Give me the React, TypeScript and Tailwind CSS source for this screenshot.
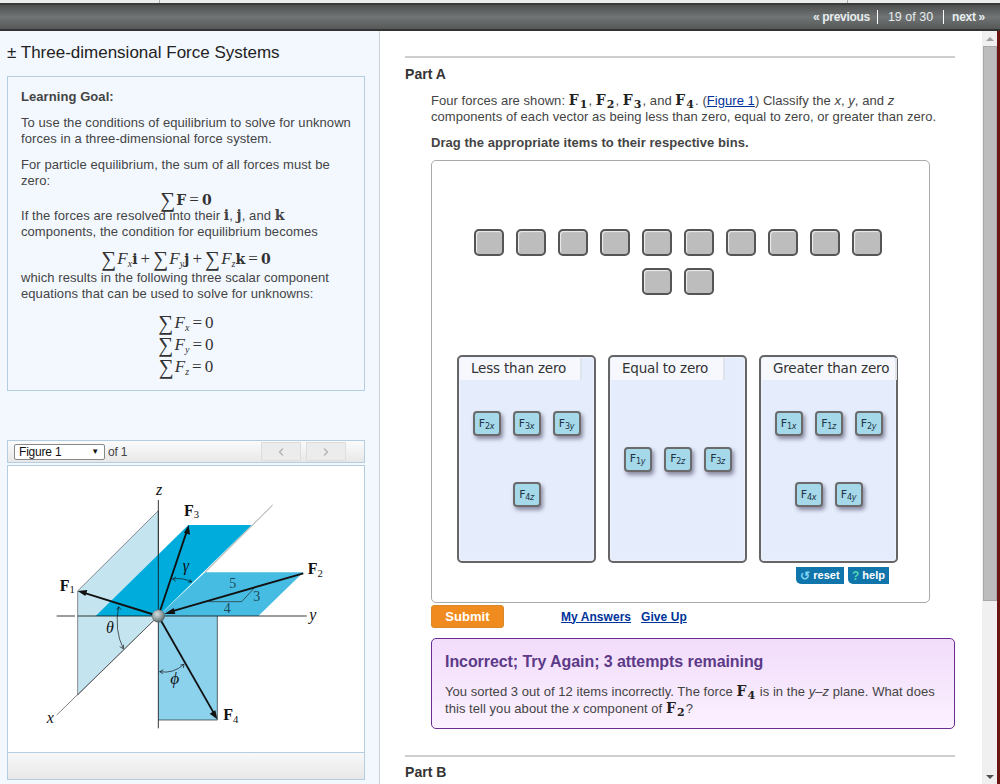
import { ChevronLeft, ChevronRight } from 'lucide-react';

const serif = "font-['Liberation_Serif',serif]";
const boldMath = "font-['DejaVu_Serif',serif] font-bold";

function Sigma() {
  return <span className={`${serif} text-[21px] leading-[20px] font-normal align-[-2px] mr-[1px]`}>∑</span>;
}

function Vec({ s, n }: { s: string; n?: string }) {
  return (
    <b className={`${boldMath} text-[14px] text-[#222]`}>
      {s}
      {n && <sub className="ml-[1px] mr-[1px] text-[11px] leading-[0]">{n}</sub>}
    </b>
  );
}

function Bm({ s }: { s: string }) {
  return <b className={`${boldMath} text-[14px]`}>{s}</b>;
}

function Fs({ a }: { a: string }) {
  return (
    <span className="italic">
      F<sub className="text-[10px] leading-[0]">{a}</sub>
    </span>
  );
}

function Op({ s }: { s: string }) {
  return <span className="mx-[3px]">{s}</span>;
}

function Eq({ children, className = '' }: { children: React.ReactNode; className?: string }) {
  return <div className={`${serif} text-center text-[17px] text-[#333] leading-[22px] whitespace-nowrap ${className}`}>{children}</div>;
}

function Slot() {
  return <div className="w-[30px] h-[27px] rounded-[5px] border-2 border-[#555] bg-[#bdbdbd] shadow-[inset_1px_1px_1px_#eee]" />;
}

function Chip({ n, a }: { n: string; a: string }) {
  return (
    <div className="w-[28px] h-[25px] rounded-[4px] border-2 border-[#6b6b6b] bg-[#a5d9ea] shadow-[2px_3px_4px_#8888a0] flex items-center justify-center text-[11px] text-[#234] font-['DejaVu_Sans',sans-serif] tracking-[-0.3px]">
      <span>
        F
        <sub className="text-[8px] leading-[0]">
          {n}
          <i>{a}</i>
        </sub>
      </span>
    </div>
  );
}

function Bin({ title, tabWidth, children }: { title: string; tabWidth: string; children: React.ReactNode }) {
  return (
    <div className="relative w-[139px] h-[208px] rounded-[5px] border-2 border-[#666] bg-[#e5edfc] shadow-[inset_0_0_2px_#fff] flex items-center justify-center">
      <div className={`absolute left-[1px] top-[1px] h-[22px] ${tabWidth} bg-[#f6f8fe] border-r-2 border-[#dfe3ea] pl-[11px] leading-[21px] text-[13.5px] text-[#333] font-['DejaVu_Sans',sans-serif] tracking-[-0.2px] whitespace-nowrap`}>
        {title}
      </div>
      <div className="w-[116px] flex flex-wrap justify-center gap-x-[12px] gap-y-[46px]">{children}</div>
    </div>
  );
}

function Figure() {
  const f = { fontFamily: 'Liberation Serif, serif' };
  return (
    <svg viewBox="0 0 930 780" width={310} height={260} style={f}>
      <defs>
        <radialGradient id="ball" cx="40%" cy="35%" r="70%">
          <stop offset="0" stopColor="#d5dedf" />
          <stop offset="0.6" stopColor="#8b9a9c" />
          <stop offset="1" stopColor="#4a5658" />
        </radialGradient>
      </defs>
      <polygon points="143,333 385,92 385,408 143,645" fill="#c4e5f0" stroke="#555" strokeWidth="2" />
      <polygon points="197,408 475,135 665,135 385,408" fill="#00acdc" />
      <polygon points="385,408 525,277 820,277 685,408" fill="#47bce2" />
      <polygon points="385,408 562,408 562,720 385,720" fill="#8cd2ec" />
      <line x1="80" y1="705" x2="385" y2="408" stroke="#444" strokeWidth="2" />
      <line x1="525" y1="277" x2="728" y2="75" stroke="#666" strokeWidth="2" />
      <line x1="385" y1="60" x2="385" y2="745" stroke="#111" strokeWidth="2.5" />
      <line x1="80" y1="408" x2="135" y2="408" stroke="#111" strokeWidth="2.5" />
      <line x1="143" y1="408" x2="830" y2="408" stroke="#111" strokeWidth="2.5" />
      <line x1="385" y1="720" x2="562" y2="720" stroke="#222" strokeWidth="2" />
      <line x1="562" y1="408" x2="562" y2="720" stroke="#222" strokeWidth="2" />
      <polyline points="535,365 635,365 672,325" fill="none" stroke="#222" strokeWidth="2" />

      <line x1="385" y1="408" x2="160" y2="338" stroke="#111" strokeWidth="5.5" />
      <polygon points="143,333 172,330 166,348" fill="#111" />
      <line x1="425" y1="394" x2="820" y2="280" stroke="#111" strokeWidth="5.5" />
      <polygon points="403,402 431,384 436,402" fill="#111" />
      <line x1="385" y1="408" x2="470" y2="155" stroke="#111" strokeWidth="5.5" />
      <polygon points="476,135 480,164 462,158" fill="#111" />
      <line x1="385" y1="408" x2="552" y2="700" stroke="#111" strokeWidth="5.5" />
      <polygon points="562,718 539,701 556,691" fill="#111" />

      <path d="M428 297 Q458 292 485 306" fill="none" stroke="#111" strokeWidth="2" />
      <path d="M428 297l10 -6M428 297l9 7M485 306l-11 0M485 306l-6 -9" fill="none" stroke="#111" strokeWidth="2" />
      <path d="M266 380 Q252 450 280 506" fill="none" stroke="#111" strokeWidth="2" />
      <path d="M266 380l-6 10M266 380l7 9M280 506l-11 -6M280 506l1 -12" fill="none" stroke="#111" strokeWidth="2" />
      <path d="M389 575 Q430 582 462 553" fill="none" stroke="#111" strokeWidth="2" />
      <path d="M389 575l11 -6M389 575l10 6M462 553l-11 2M462 553l-2 11" fill="none" stroke="#111" strokeWidth="2" />

      <circle cx="385" cy="408" r="19" fill="url(#ball)" stroke="#555" strokeWidth="1" />

      <g fontSize="48" fill="#111">
        <text x="89" y="332" fontWeight="700">F<tspan fontSize="32" dy="8" fontWeight="400">1</tspan></text>
        <text x="833" y="282" fontWeight="700">F<tspan fontSize="32" dy="8" fontWeight="400">2</tspan></text>
        <text x="462" y="107" fontWeight="700">F<tspan fontSize="32" dy="8" fontWeight="400">3</tspan></text>
        <text x="580" y="720" fontWeight="700">F<tspan fontSize="32" dy="8" fontWeight="400">4</tspan></text>
        <text x="378" y="46" fontStyle="italic">z</text>
        <text x="838" y="420" fontStyle="italic">y</text>
        <text x="50" y="728" fontStyle="italic">x</text>
        <text x="458" y="272" fontStyle="italic">γ</text>
        <text x="228" y="458" fontStyle="italic">θ</text>
        <text x="421" y="612" fontStyle="italic" fontSize="52">ϕ</text>
      </g>
      <g fontSize="42" fill="#1d4a5c">
        <text x="598" y="323">5</text>
        <text x="670" y="364">3</text>
        <text x="581" y="398">4</text>
      </g>
    </svg>
  );
}

function LeftPanel() {
  return (
    <div className="w-[380px] shrink-0 h-full bg-[#f3f8ff] border-r border-[#c9d3dc] px-[7px] overflow-hidden">
      <h1 className="mt-[10px] h-[24px] leading-[24px] text-[17px] text-[#222] whitespace-nowrap">± Three-dimensional Force Systems</h1>
      <div className="mt-[11px] h-[315px] w-[358px] border border-[#b5cde0] px-[13px] pt-[12px] text-[13px] leading-[16px] text-[#444] tracking-[0.07px]">
        <p className="font-bold">Learning Goal:</p>
        <p className="mt-[10px]">
          To use the conditions of equilibrium to solve for unknown forces in a three-dimensional force system.
        </p>
        <p className="mt-[10px] pr-[20px]">For particle equilibrium, the sum of all forces must be zero:</p>
        <Eq className="h-[18px] leading-[16px]">
          <Sigma />
          <Bm s="F" />
          <Op s="=" />
          <Bm s="0" />
        </Eq>
        <p>
          If the forces are resolved into their <Bm s="i" />, <Bm s="j" />, and <Bm s="k" /> components, the condition for equilibrium becomes
        </p>
        <Eq className="h-[30px] pt-[8px]">
          <Sigma />
          <Fs a="x" />
          <Bm s="i" />
          <Op s="+" />
          <Sigma />
          <Fs a="y" />
          <Bm s="j" />
          <Op s="+" />
          <Sigma />
          <Fs a="z" />
          <Bm s="k" />
          <Op s="=" />
          <Bm s="0" />
        </Eq>
        <p>which results in the following three scalar component equations that can be used to solve for unknowns:</p>
        <Eq className="mt-[10px]">
          <Sigma />
          <Fs a="x" />
          <Op s="=" />0
        </Eq>
        <Eq>
          <Sigma />
          <Fs a="y" />
          <Op s="=" />0
        </Eq>
        <Eq>
          <Sigma />
          <Fs a="z" />
          <Op s="=" />0
        </Eq>
      </div>
      <div className="mt-[49px] w-[358px] h-[23px] border border-[#b5cde0] bg-gradient-to-b from-[#fbfbfb] to-[#e8e8e8] flex items-center pl-[6px] text-[12px] tracking-[-0.2px]">
        <div className="w-[91px] h-[16px] border border-[#888] rounded-[2px] bg-white flex items-center justify-between pl-[4px] pr-[5px] text-[#111] leading-none">
          Figure 1<span className="text-[8px]">▼</span>
        </div>
        <span className="ml-[3px] text-[#444]">of 1</span>
        <div className="ml-auto mr-[18px] flex gap-[5px]">
          <div className="w-[40px] h-[19px] border border-[#ddd] bg-[#ececec] flex items-center justify-center">
            <ChevronLeft size={12} strokeWidth={3} className="text-[#b5b5b5]" />
          </div>
          <div className="w-[40px] h-[19px] border border-[#ddd] bg-[#ececec] flex items-center justify-center">
            <ChevronRight size={12} strokeWidth={3} className="text-[#b5b5b5]" />
          </div>
        </div>
      </div>
      <div className="mt-[2px] w-[358px] h-[288px] border border-[#b5cde0] bg-white pl-[22px] pt-[14px]">
        <Figure />
      </div>
      <div className="w-[358px] h-[27px] border-x border-b border-[#b5cde0] bg-gradient-to-b from-[#f8f8f8] to-[#e8e8e8]" />
    </div>
  );
}

function RightPanel() {
  return (
    <div className="flex-1 h-full bg-white pl-[25px] pr-[27px] overflow-hidden text-[13px] leading-[16px] text-[#444] tracking-[0.05px]">
      <div className="mt-[25px] border-t-2 border-[#cfcfcf]" />
      <h2 className="mt-[7px] text-[14px] font-bold text-[#333] leading-[18px]">Part A</h2>
      <div className="pl-[26px]">
        <p className="mt-[9px] whitespace-nowrap">
          Four forces are shown: <Vec s="F" n="1" />, <Vec s="F" n="2" />, <Vec s="F" n="3" />, and <Vec s="F" n="4" />. (
          <span className="text-[#003399] underline">Figure 1</span>) Classify the <i>x</i>, <i>y</i>, and <i>z</i>
          <br />
          components of each vector as being less than zero, equal to zero, or greater than zero.
        </p>
        <p className="mt-[10px] font-bold">Drag the appropriate items to their respective bins.</p>
        <div className="mt-[9px] w-[499px] h-[443px] border border-[#aaa] rounded-[5px] pr-[6px] flex flex-col items-center">
          <div className="mt-[68px] w-[420px] flex flex-wrap justify-center gap-x-[12px] gap-y-[12px]">
            {Array.from({ length: 12 }, (_, i) => (
              <Slot key={i} />
            ))}
          </div>
          <div className="mt-[60px] flex gap-[12px]">
            <Bin title="Less than zero" tabWidth="w-[122px]">
              <Chip n="2" a="x" />
              <Chip n="3" a="x" />
              <Chip n="3" a="y" />
              <Chip n="4" a="z" />
            </Bin>
            <Bin title="Equal to zero" tabWidth="w-[114px]">
              <Chip n="1" a="y" />
              <Chip n="2" a="z" />
              <Chip n="3" a="z" />
            </Bin>
            <Bin title="Greater than zero" tabWidth="w-[135px]">
              <Chip n="1" a="x" />
              <Chip n="1" a="z" />
              <Chip n="2" a="y" />
              <Chip n="4" a="x" />
              <Chip n="4" a="y" />
            </Bin>
          </div>
          <div className="mt-[4px] w-full pr-[34px] flex justify-end gap-[4px] text-[11px] font-bold text-white tracking-normal">
            <div className="w-[48px] h-[17px] rounded-bl-[5px] bg-[#0f75ab] flex items-center justify-center leading-none">
              <span className="text-[#7fd4f5] mr-[3px] text-[12px]">↺</span>reset
            </div>
            <div className="w-[41px] h-[17px] rounded-bl-[5px] bg-[#0f75ab] flex items-center justify-center leading-none">
              <span className="text-[#52d6b0] mr-[3px] text-[12px]">?</span>help
            </div>
          </div>
        </div>
        <div className="mt-[2px] flex items-center">
          <div className="w-[73px] h-[23px] rounded-[3px] border border-[#d98a2a] bg-[#f08c1f] text-white font-bold text-center leading-[21px] text-[13px]">Submit</div>
          <span className="ml-[57px] text-[12px] font-bold text-[#003399] underline">My Answers</span>
          <span className="ml-[10px] text-[12px] font-bold text-[#003399] underline">Give Up</span>
        </div>
        <div className="mt-[10px] h-[91px] rounded-[5px] border border-[#6a2c8e] bg-gradient-to-b from-[#f2dcfb] to-[#fbf1ff] px-[13px] pt-[13px]">
          <div className="text-[16px] font-bold text-[#5c3a87] leading-[20px] tracking-[-0.07px]">Incorrect; Try Again; 3 attempts remaining</div>
          <p className="mt-[11px] whitespace-nowrap">
            You sorted 3 out of 12 items incorrectly. The force <Vec s="F" n="4" /> is in the <i>y</i>–<i>z</i> plane. What does
            <br />
            this tell you about the <i>x</i> component of <Vec s="F" n="2" />?
          </p>
        </div>
      </div>
      <div className="mt-[26px] border-t-2 border-[#cfcfcf]" />
      <h2 className="mt-[6px] text-[14px] font-bold text-[#333] leading-[18px]">Part B</h2>
    </div>
  );
}

function Scrollbar() {
  return (
    <div className="w-[15px] h-full shrink-0 bg-[#f0f0f0] flex flex-col items-center">
      <div className="h-[15px] flex items-center justify-center">
        <div className="w-0 h-0 border-x-[4px] border-x-transparent border-b-[4px] border-b-[#a0a0a0]" />
      </div>
      <div className="w-[14px] h-[555px] bg-[#bcbcbc] border border-[#a8a8a8]" />
      <div className="mt-auto h-[15px] flex items-center justify-center">
        <div className="w-0 h-0 border-x-[4px] border-x-transparent border-t-[4px] border-t-[#505050]" />
      </div>
    </div>
  );
}

export default function App() {
  return (
    <div className="w-[1000px] h-[784px] overflow-hidden flex flex-col font-['Liberation_Sans',Arial,sans-serif] bg-white">
      <div className="h-[3px] bg-[#ececec] flex shrink-0">
        <div className="ml-[159px] w-[1px] bg-[#aaa]" />
        <div className="ml-[687px] w-[1px] bg-[#aaa]" />
      </div>
      <div className="h-[28px] shrink-0 border-t-2 border-b-2 border-t-[#3a3c3c] border-b-[#333] bg-gradient-to-b from-[#4e5050] via-[#717474] to-[#565858] flex items-center justify-end pr-[15px] text-[12px] text-[#e6ecee] font-semibold tracking-[-0.3px]">
        <span className="pr-[7px] border-r border-white leading-[14px]">« previous</span>
        <span className="px-[10px] border-r border-white leading-[14px] font-normal text-[12.5px] tracking-normal">19 of 30</span>
        <span className="pl-[8px] leading-[14px]">next »</span>
      </div>
      <div className="flex-1 min-h-0 flex">
        <LeftPanel />
        <RightPanel />
        <Scrollbar />
        <div className="w-[3px] h-full bg-[#6b1410] shrink-0" />
      </div>
    </div>
  );
}
